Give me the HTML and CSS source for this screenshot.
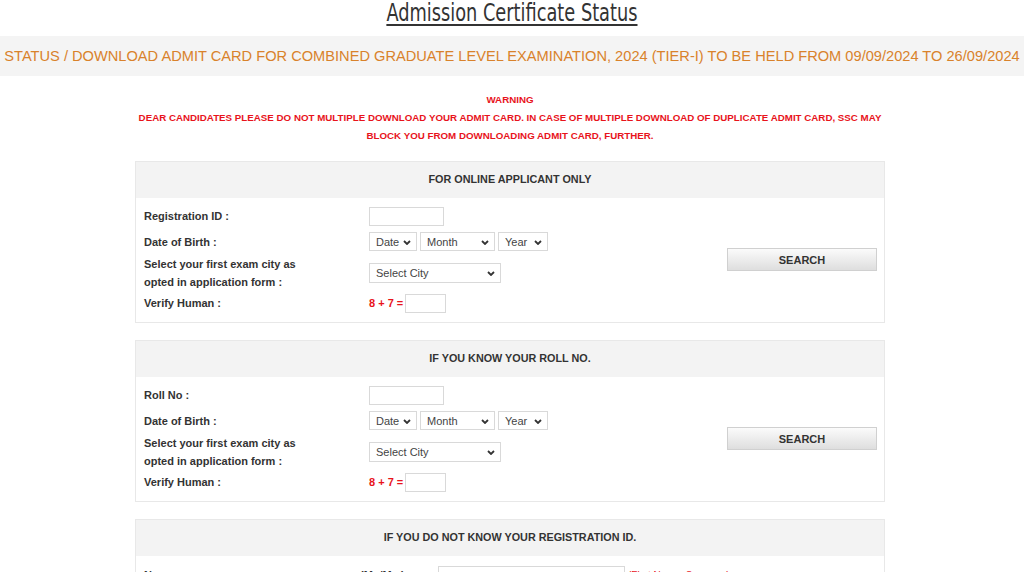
FILE: index.html
```html
<!DOCTYPE html>
<html lang="en">
<head>
<meta charset="utf-8">
<title>Admission Certificate Status</title>
<link rel="stylesheet" href="styles.css">
</head>
<body>
<h1 class="title"><span>Admission Certificate Status</span></h1>
<div class="banner">STATUS / DOWNLOAD ADMIT CARD FOR COMBINED GRADUATE LEVEL EXAMINATION, 2024 (TIER-I) TO BE HELD FROM 09/09/2024 TO 26/09/2024</div>
<main class="main">
<div class="warning">
  <div>WARNING</div>
  <div>DEAR CANDIDATES PLEASE DO NOT MULTIPLE DOWNLOAD YOUR ADMIT CARD. IN CASE OF MULTIPLE DOWNLOAD OF DUPLICATE ADMIT CARD, SSC MAY<br>BLOCK YOU FROM DOWNLOADING ADMIT CARD, FURTHER.</div>
</div>

<section class="box">
  <div class="box-head">FOR ONLINE APPLICANT ONLY</div>
  <div class="box-body">
    <div class="lbl r1">Registration ID :</div>
    <div class="ctl r1"><input class="txt w75" type="text"></div>
    <div class="lbl r2">Date of Birth :</div>
    <div class="ctl r2 dob">
      <span class="sw"><select class="sel w48"><option>Date</option></select><svg class="chev" viewBox="0 0 8 5"><path d="M1 1 L4 4 L7 1"/></svg></span>
      <span class="sw"><select class="sel w75"><option>Month</option></select><svg class="chev" viewBox="0 0 8 5"><path d="M1 1 L4 4 L7 1"/></svg></span>
      <span class="sw"><select class="sel w50"><option>Year</option></select><svg class="chev" viewBox="0 0 8 5"><path d="M1 1 L4 4 L7 1"/></svg></span>
    </div>
    <div class="lbl r3">Select your first exam city as<br>opted in application form :</div>
    <div class="ctl r3"><span class="sw"><select class="sel w132 tall"><option>Select City</option></select><svg class="chev" viewBox="0 0 8 5"><path d="M1 1 L4 4 L7 1"/></svg></span></div>
    <div class="lbl r4">Verify Human :</div>
    <div class="ctl r4"><span class="captcha">8 + 7 =</span><input class="txt w41" type="text"></div>
    <div class="btn-cell"><button class="btn" type="button">SEARCH</button></div>
  </div>
</section>

<section class="box">
  <div class="box-head">IF YOU KNOW YOUR ROLL NO.</div>
  <div class="box-body">
    <div class="lbl r1">Roll No :</div>
    <div class="ctl r1"><input class="txt w75" type="text"></div>
    <div class="lbl r2">Date of Birth :</div>
    <div class="ctl r2 dob">
      <span class="sw"><select class="sel w48"><option>Date</option></select><svg class="chev" viewBox="0 0 8 5"><path d="M1 1 L4 4 L7 1"/></svg></span>
      <span class="sw"><select class="sel w75"><option>Month</option></select><svg class="chev" viewBox="0 0 8 5"><path d="M1 1 L4 4 L7 1"/></svg></span>
      <span class="sw"><select class="sel w50"><option>Year</option></select><svg class="chev" viewBox="0 0 8 5"><path d="M1 1 L4 4 L7 1"/></svg></span>
    </div>
    <div class="lbl r3">Select your first exam city as<br>opted in application form :</div>
    <div class="ctl r3"><span class="sw"><select class="sel w132 tall"><option>Select City</option></select><svg class="chev" viewBox="0 0 8 5"><path d="M1 1 L4 4 L7 1"/></svg></span></div>
    <div class="lbl r4">Verify Human :</div>
    <div class="ctl r4"><span class="captcha">8 + 7 =</span><input class="txt w41" type="text"></div>
    <div class="btn-cell"><button class="btn" type="button">SEARCH</button></div>
  </div>
</section>

<section class="box">
  <div class="box-head">IF YOU DO NOT KNOW YOUR REGISTRATION ID.</div>
  <div class="name-row">
    <div class="lbl">Name :</div>
    <div class="mrms">(Mr./Ms.)</div>
    <input class="txt w187" type="text">
    <span class="hint">(First Name, Surname)</span>
  </div>
</section>
</main>
</body>
</html>
```
FILE: styles.css
```css
html, body {
  margin: 0;
  padding: 0;
  background: #fff;
}
body {
  font-family: "Liberation Sans", Arial, sans-serif;
  color: #333;
}
.title {
  margin: 0;
  height: 36px;
  text-align: center;
  font-family: "DejaVu Sans Condensed", "Liberation Sans Narrow", sans-serif;
  font-weight: normal;
  font-size: 25px;
  line-height: 26px;
  color: #333;
}
.title span {
  display: inline-block;
  transform: scaleX(0.79);
  text-decoration: underline;
  text-decoration-thickness: 2px;
  text-underline-offset: 3px;
}
.banner {
  height: 40px;
  line-height: 40px;
  background: #f4f4f4;
  color: #d9822b;
  font-size: 14.63px;
  text-align: center;
  white-space: nowrap;
}
.main {
  padding-right: 4px;
}
.warning {
  margin-top: 15px;
  color: #e8131b;
  font-weight: bold;
  font-size: 9.75px;
  line-height: 18px;
  text-align: center;
}
.box {
  width: 748px;
  margin: 16px auto 0;
  border: 1px solid #e8e8e8;
}
.box + .box {
  margin-top: 17px;
}
.box-head {
  height: 36px;
  line-height: 35px;
  background: #f3f3f3;
  text-align: center;
  font-size: 10.8px;
  font-weight: bold;
  color: #333;
}
.box-body {
  display: grid;
  grid-template-columns: 225px 1fr 150px;
  grid-template-rows: 24px 27px 36px 24px;
  padding: 6px 7px 7px 8px;
}
.lbl {
  display: flex;
  align-items: center;
  font-size: 11px;
  font-weight: bold;
  line-height: 18px;
  color: #333;
}
.ctl {
  display: flex;
  align-items: center;
  gap: 4px;
}
.ctl.dob {
  gap: 3px;
}
.r1 { grid-row: 1; }
.r2 { grid-row: 2; }
.r3 { grid-row: 3; }
.r4 { grid-row: 4; }
.lbl.r1, .lbl.r2, .lbl.r3, .lbl.r4 { grid-column: 1; }
.ctl.r1, .ctl.r2, .ctl.r3, .ctl.r4 { grid-column: 2; }
.btn-cell {
  grid-column: 3;
  grid-row: 1 / span 4;
  display: flex;
  align-items: center;
}
.txt {
  box-sizing: border-box;
  height: 19px;
  margin: 0;
  padding: 0 3px;
  border: 1px solid #d9d9d9;
  background: #fff;
  font: 11px "Liberation Sans", Arial, sans-serif;
}
.sw {
  position: relative;
  display: inline-flex;
}
.sel {
  -webkit-appearance: none;
  appearance: none;
  box-sizing: border-box;
  height: 19px;
  margin: 0;
  padding: 0 0 0 6px;
  border: 1px solid #d9d9d9;
  border-radius: 0;
  background: #fff;
  color: #444;
  font: 11px "Liberation Sans", Arial, sans-serif;
}
.sel.tall { height: 20px; }
.chev {
  position: absolute;
  right: 6px;
  top: 50%;
  width: 8px;
  height: 5px;
  margin-top: -2px;
  fill: none;
  stroke: #333;
  stroke-width: 1.8;
  pointer-events: none;
}
.w41 { width: 41px; }
.w48 { width: 48px; }
.w50 { width: 50px; }
.w75 { width: 75px; }
.w132 { width: 132px; }
.w187 { width: 187px; }
.captcha {
  color: #e8131b;
  font-size: 11px;
  font-weight: bold;
  margin-right: -2px;
}
.btn {
  box-sizing: border-box;
  width: 150px;
  height: 23px;
  margin: 0;
  border: 1px solid #d0d0d0;
  border-radius: 0;
  background: linear-gradient(#fbfbfb, #dedede);
  font: bold 11px "Liberation Sans", Arial, sans-serif;
  color: #333;
}
.name-row {
  display: flex;
  align-items: center;
  height: 38px;
  padding: 0 8px;
}
.name-row .lbl {
  width: 216px;
}
.mrms {
  width: 78px;
  font-size: 11px;
  font-weight: bold;
}
.hint {
  margin-left: 3px;
  color: #e8131b;
  font-size: 10px;
}
```
